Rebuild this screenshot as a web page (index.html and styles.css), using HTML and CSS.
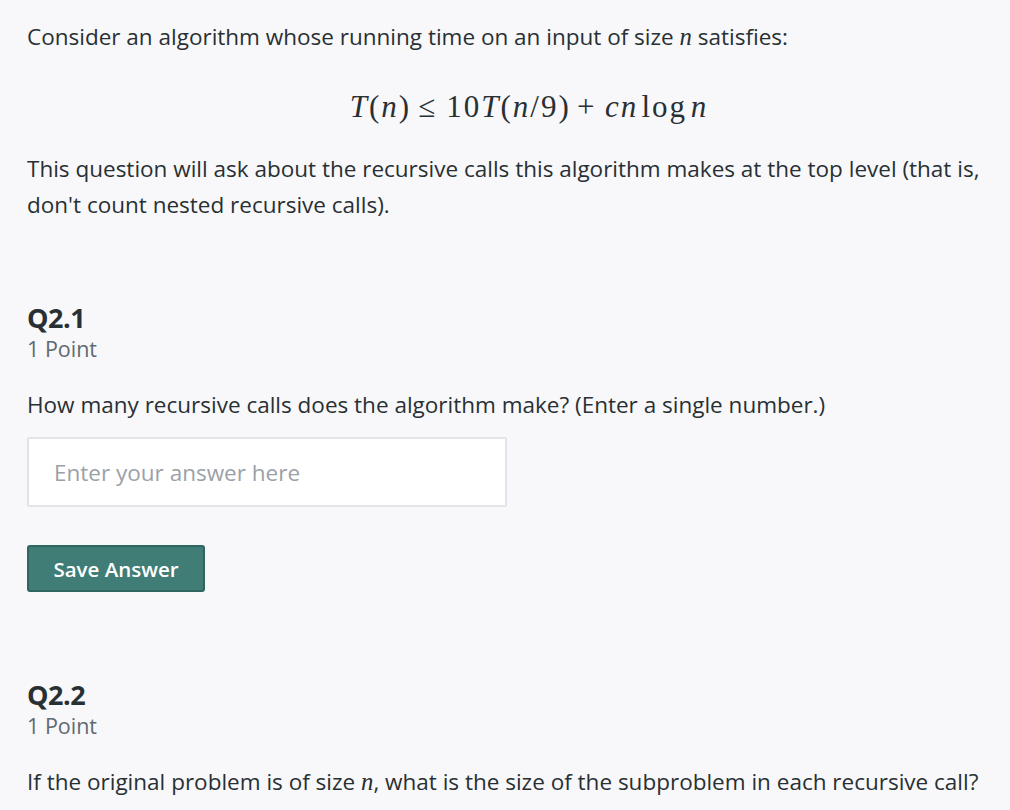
FILE: index.html
```html
<!DOCTYPE html>
<html>

<head>
  <title>Q2</title>
  <meta charset="utf-8">
  <link rel="stylesheet" href="styles.css">
</head>

<body>
  <div class="intro">
    <p>Consider an algorithm whose running time on an input of size <span class="math">n</span> satisfies:</p>
    <div class="display">
      <span class="math">T</span>(<span class="math">n</span>)<span class="rel">≤</span>10<span class="math">T</span>(<span class="math">n</span>/9)<span class="bin">+</span><span class="math">cn</span><span class="op">log</span><span class="math">n</span>
    </div>
    <p>This question will ask about the recursive calls this algorithm makes at the top level (that is, don't count nested recursive calls).</p>
  </div>

  <div class="question">
    <h2>Q2.1</h2>
    <div class="points">1 Point</div>
    <p class="prompt">How many recursive calls does the algorithm make? (Enter a single number.)</p>
    <input class="answer" type="text" placeholder="Enter your answer here">
    <button class="save">Save Answer</button>
  </div>

  <div class="question">
    <h2>Q2.2</h2>
    <div class="points">1 Point</div>
    <p class="prompt">If the original problem is of size <span class="math">n</span>, what is the size of the subproblem in each recursive call?</p>
  </div>
</body>

</html>
```

FILE: styles.css
```css
* {
  padding: 0;
  margin: 0;
  box-sizing: border-box;
}

body {
  background: #f8f8fa;
  color: #283034;
  font-family: "Open Sans", sans-serif;
  font-size: 22.5px;
  line-height: 36px;
  padding: 19px 27px 0 27px;
}

.math {
  font-family: "Liberation Serif", serif;
  font-style: italic;
  font-size: 1.1em;
}

.display {
  text-align: center;
  font-family: "Liberation Serif", serif;
  font-size: 31px;
  letter-spacing: 2px;
  padding-left: 48px;
  margin: 34px 0 26px 0;
}

.display .math {
  font-size: 1em;
}

.rel {
  margin: 0 0.28em 0 0.24em;
}

.bin {
  margin: 0 0.28em 0 0.2em;
}

.op {
  margin: 0 0.12em 0 0.1em;
}

.intro p {
  margin: 0;
}

.question {
  margin-top: 80px;
}

.question + .question {
  margin-top: 88px;
}

h2 {
  font-size: 27px;
  font-weight: 700;
  line-height: 30px;
  letter-spacing: -0.5px;
}

.points {
  color: #5f6a70;
  font-size: 21.5px;
  line-height: 32px;
}

.prompt {
  margin-top: 22px;
}

.answer {
  display: block;
  width: 480px;
  height: 70px;
  margin-top: 14px;
  padding: 0 25px;
  border: 2px solid #e0e3e7;
  border-radius: 2px;
  background: #fff;
  font-family: "Open Sans", sans-serif;
  font-size: 22.5px;
  color: #283034;
}

.answer::placeholder {
  color: #9aa1a7;
}

.save {
  display: block;
  margin-top: 38px;
  width: 178px;
  height: 47px;
  background: #3f7d76;
  border: 2px solid #2f665f;
  border-radius: 3px;
  color: #fff;
  font-family: "Open Sans", sans-serif;
  font-size: 20.5px;
  font-weight: 600;
}
```
